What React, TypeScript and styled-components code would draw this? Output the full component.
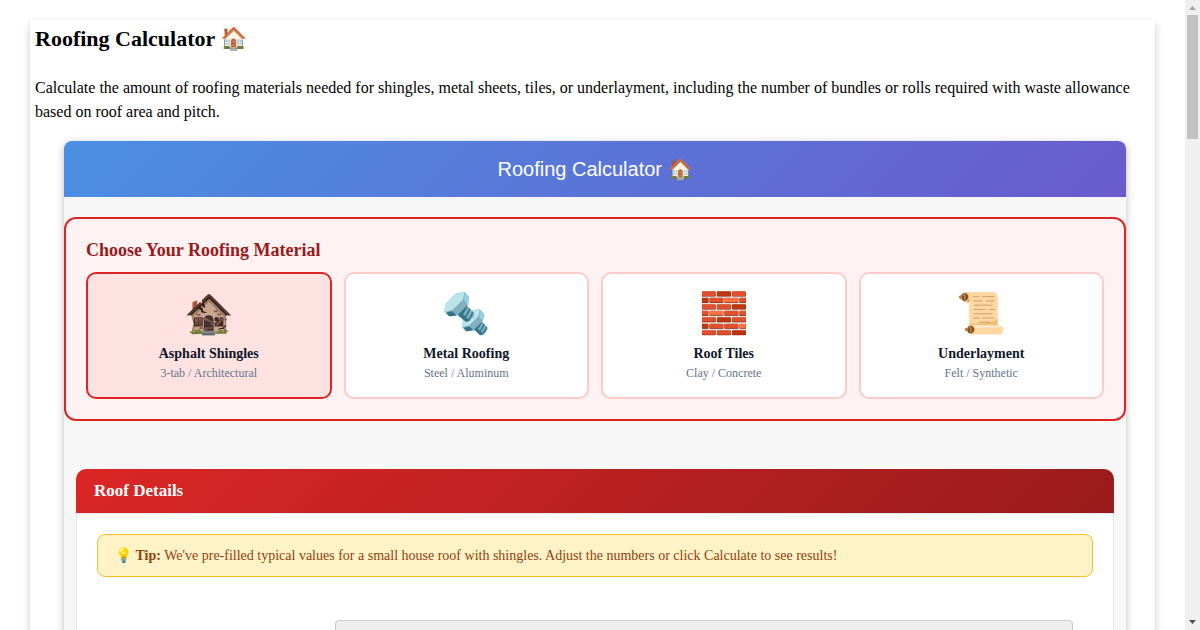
import React, { useState } from "react";
import styled, { createGlobalStyle } from "styled-components";

const serif = `"Liberation Serif", "Times New Roman", serif`;
const sans = `"Liberation Sans", Arial, sans-serif`;

const GlobalStyle = createGlobalStyle`
  *, *::before, *::after { box-sizing: border-box; }
  body { margin: 0; background: #fff; color: #000; font: 16px/24px ${serif}; }
  h1, h2, h3, p { margin: 0; }
`;

const Shell = styled.div`
  display: flex;
  height: 100vh;
`;

const Scroller = styled.main`
  flex: 1;
  min-width: 0;
  overflow-y: auto;
  scrollbar-width: none;
`;

const Track = styled.div`
  display: flex;
  flex-direction: column;
  flex: none;
  width: 15px;
  padding: 0 2px;
  background: #f0f0f0;
`;

const Arrow = styled.svg`
  display: block;
  width: 11px;
  height: 15px;
`;

const Thumb = styled.div`
  width: 11px;
  height: 124px;
  margin-bottom: auto;
  background: #c1c1c1;
`;

const Sheet = styled.article`
  margin: 20px 30px;
  padding: 0 0 20px 5px;
  box-shadow: 0 4px 8px rgba(0, 0, 0, 0.2);
`;

const PageTitle = styled.h1`
  padding: 4px 0;
  font-size: 22px;
  line-height: 30px;
`;

const Intro = styled.p`
  padding: 18px 5px 17px 0;
`;

const Calculator = styled.section`
  margin: 0 29px;
  padding-bottom: 20px;
  background: #f7f7f7;
  border-radius: 8px;
  box-shadow: 0 2px 8px rgba(0, 0, 0, 0.26);
`;

const Banner = styled.h2`
  padding: 16px;
  background: linear-gradient(135deg, #4a90e2, #6a5acd);
  border-radius: 8px 8px 0 0;
  color: #fff;
  font: 400 20px/24px ${sans};
  text-align: center;
`;

const MaterialPicker = styled.section`
  margin: 20px 0 48px;
  padding: 20px;
  background: #fef2f2;
  border: 2px solid #dc2626;
  border-radius: 12px;
`;

const PickerTitle = styled.h3`
  padding-bottom: 10px;
  color: #991b1b;
  font-size: 18px;
  line-height: 23px;
`;

const MaterialGrid = styled.div`
  display: grid;
  grid-template-columns: repeat(4, 1fr);
  gap: 12px;
`;

const MaterialCard = styled.button<{ $active: boolean }>`
  display: flex;
  flex-direction: column;
  align-items: center;
  padding: 16px 12px 15px;
  background: ${(p) => (p.$active ? "#fee2e2" : "#fff")};
  border: 2px solid ${(p) => (p.$active ? "#dc2626" : "#fecaca")};
  border-radius: 10px;
  font-family: ${serif};
  cursor: pointer;
`;

const MaterialIcon = styled.span`
  font-size: 40px;
  line-height: 48px;
`;

const MaterialName = styled.strong`
  padding-top: 6px;
  color: #0f172a;
  font-size: 14px;
  line-height: 20px;
`;

const MaterialNote = styled.span`
  color: #64748b;
  font-size: 12px;
  line-height: 18px;
`;

const Details = styled.section`
  margin: 0 12px;
`;

const DetailsTitle = styled.h3`
  padding: 12px 18px;
  background: linear-gradient(135deg, #dc2626, #991b1b);
  border-radius: 10px 10px 0 0;
  color: #fff;
  font-size: 17px;
  line-height: 20px;
`;

const DetailsBody = styled.div`
  padding: 20px;
  background: #fff;
  border: 1px solid #e2e8f0;
`;

const Tip = styled.p`
  padding: 10px 17px;
  background: #fef3c7;
  border: 1px solid #fbbf24;
  border-radius: 8px;
  color: #92400e;
  font-size: 14px;
  line-height: 21px;
`;

const Field = styled.div`
  display: flex;
  padding: 43px 20px 0 238px;
`;

const ValueBox = styled.input`
  flex: 1;
  min-width: 0;
  height: 40px;
  padding: 8px;
  background: #eee;
  border: 1px solid #ccc;
  border-radius: 4px;
  font: 16px ${sans};
`;

const materials = [
  { icon: "🏚️", name: "Asphalt Shingles", note: "3-tab / Architectural" },
  { icon: "🔩", name: "Metal Roofing", note: "Steel / Aluminum" },
  { icon: "🧱", name: "Roof Tiles", note: "Clay / Concrete" },
  { icon: "📜", name: "Underlayment", note: "Felt / Synthetic" },
];

export default function App() {
  const [selected, setSelected] = useState(materials[0].name);

  return (
    <Shell>
      <GlobalStyle />
      <Scroller>
        <Sheet>
          <PageTitle>Roofing Calculator 🏠</PageTitle>
          <Intro>
            Calculate the amount of roofing materials needed for shingles, metal sheets, tiles, or underlayment,
            including the number of bundles or rolls required with waste allowance based on roof area and pitch.
          </Intro>
          <Calculator>
            <Banner>Roofing Calculator 🏠</Banner>
            <MaterialPicker>
              <PickerTitle>Choose Your Roofing Material</PickerTitle>
              <MaterialGrid>
                {materials.map((m) => (
                  <MaterialCard
                    key={m.name}
                    type="button"
                    $active={m.name === selected}
                    aria-pressed={m.name === selected}
                    onClick={() => setSelected(m.name)}
                  >
                    <MaterialIcon>{m.icon}</MaterialIcon>
                    <MaterialName>{m.name}</MaterialName>
                    <MaterialNote>{m.note}</MaterialNote>
                  </MaterialCard>
                ))}
              </MaterialGrid>
            </MaterialPicker>
            <Details>
              <DetailsTitle>Roof Details</DetailsTitle>
              <DetailsBody>
                <Tip>
                  💡 <strong>Tip:</strong> We've pre-filled typical values for a small house roof with shingles. Adjust
                  the numbers or click Calculate to see results!
                </Tip>
                <Field>
                  <ValueBox type="text" aria-label="Roof Details" />
                </Field>
              </DetailsBody>
            </Details>
          </Calculator>
        </Sheet>
      </Scroller>
      <Track aria-hidden="true">
        <Arrow viewBox="0 0 11 15">
          <path d="M2 10h7L5.500 6z" fill="#a3a3a3" />
        </Arrow>
        <Thumb />
        <Arrow viewBox="0 0 11 15">
          <path d="M2 5h7L5.500 9z" fill="#505050" />
        </Arrow>
      </Track>
    </Shell>
  );
}
